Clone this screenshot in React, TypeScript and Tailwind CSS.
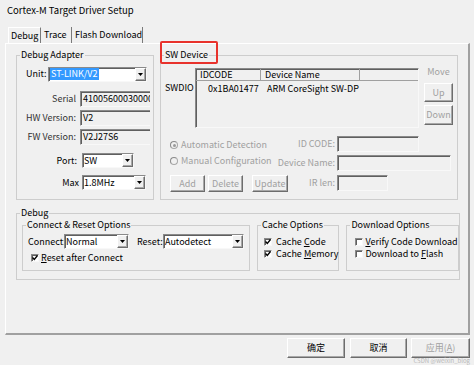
import type { ReactNode } from 'react'

const sunken =
  'border border-t-[#8a8a8a] border-l-[#8a8a8a] border-r-[#f8f8f8] border-b-[#f8f8f8] shadow-[inset_1px_1px_0_#5f5f5f]'
const raised =
  'border border-t-white border-l-white border-r-[#6d6d6d] border-b-[#6d6d6d] shadow-[inset_-1px_-1px_0_#a8a8a8]'

function Group({
  title,
  className,
  children,
}: {
  title: string
  className: string
  children?: ReactNode
}) {
  return (
    <fieldset className={`border border-[#cdcdcd] ${className}`}>
      <legend className="ml-[3px] h-[12px] px-[1px] leading-[12px]">{title}</legend>
      {children}
    </fieldset>
  )
}

function Arrow() {
  return (
    <div className={`flex w-[11px] shrink-0 items-center justify-center bg-[#f0f0f0] ${raised}`}>
      <svg width="5" height="3" viewBox="0 0 5 3">
        <path d="M0 0h5L2.5 3z" fill="#000" />
      </svg>
    </div>
  )
}

function Select({ className, children }: { className: string; children: ReactNode }) {
  return (
    <div className={`flex h-[15px] shrink-0 bg-white ${sunken} ${className}`}>
      <div className="flex flex-1 items-center overflow-hidden pl-[1px]">{children}</div>
      <Arrow />
    </div>
  )
}

function Field({ className, children }: { className: string; children?: ReactNode }) {
  return (
    <div className={`flex h-[16px] shrink-0 items-center overflow-hidden pl-[2px] ${sunken} ${className}`}>
      {children}
    </div>
  )
}

function Check({ on }: { on?: boolean }) {
  return (
    <span className={`flex h-[8px] w-[8px] shrink-0 items-center justify-center bg-white ${sunken}`}>
      {on && (
        <svg width="6" height="6" viewBox="0 0 6 6">
          <path d="M0.5 2.5l1.8 2 3.2-4" stroke="#000" strokeWidth="1.4" fill="none" />
        </svg>
      )}
    </span>
  )
}

function Radio({ on }: { on?: boolean }) {
  return (
    <span className="flex h-[8px] w-[8px] shrink-0 items-center justify-center rounded-full border border-[#a8a8a8] border-t-[#8a8a8a] border-l-[#8a8a8a] bg-[#f0f0f0]">
      {on && <span className="h-[3px] w-[3px] rounded-full bg-[#9a9a9a]" />}
    </span>
  )
}

function Btn({
  className,
  disabled,
  children,
}: {
  className: string
  disabled?: boolean
  children: ReactNode
}) {
  return (
    <div
      className={`flex shrink-0 items-center justify-center bg-[#f0f0f0] ${raised} ${
        disabled ? 'text-[#a0a0a0]' : 'text-black'
      } ${className}`}
    >
      {children}
    </div>
  )
}

export default function App() {
  return (
    <div className="relative h-[365px] w-[474px] overflow-hidden whitespace-nowrap bg-[#f0f0f0] font-[family-name:'Noto_Sans_CJK_SC','Noto_Sans',sans-serif] text-[9px] leading-[12px] text-black">
      <div className="flex h-[20px] items-center pl-[7px] text-[9.5px]">Cortex-M Target Driver Setup</div>

      {/* tabs */}
      <div className="mt-[7px] flex h-[16px] pl-[8px]">
        <div className="flex w-[33px] items-center border-l border-t border-white border-r border-r-[#7a7a7a] pl-[2px]">
          Debug
        </div>
        <div className="flex w-[31px] items-center border-r border-[#7a7a7a] pl-[3px]">Trace</div>
        <div className="flex w-[71px] items-center border-r border-[#7a7a7a] pl-[3px]">
          Flash Download
        </div>
      </div>

      {/* tab page */}
      <div className="ml-[5px] h-[292px] w-[465px] border-l border-t border-white border-r-2 border-b-2 border-r-[#a0a0a0] border-b-[#a0a0a0] pl-[10px] pt-[5px]">
        <div className="flex gap-[6px]">
          <Group title="Debug Adapter" className="h-[151px] w-[138px]">
            <div className="mt-[5px] flex h-[16px] items-center pl-[9px]">
              <span className="w-[22px]">Unit:</span>
              <Select className="w-[99px]">
                <span className="bg-[#3399ff] px-[1px] text-white">ST-LINK/V2</span>
              </Select>
            </div>
            <div className="mt-[9px] flex items-center">
              <span className="w-[59px] text-right text-[#333]">Serial</span>
              <Field className="ml-[4px] w-[70px] border-r-0">410056000300000</Field>
            </div>
            <div className="mt-[3px] flex items-center">
              <span className="w-[59px] text-right text-[#333]">HW Version:</span>
              <Field className="ml-[4px] w-[70px] border-r-0">V2</Field>
            </div>
            <div className="mt-[3px] flex items-center">
              <span className="w-[59px] text-right text-[#333]">FW Version:</span>
              <Field className="ml-[4px] w-[70px] border-r-0">V2J27S6</Field>
            </div>
            <div className="mt-[8px] flex items-center">
              <span className="w-[60px] text-right">Port:</span>
              <Select className="ml-[5px] w-[52px]">SW</Select>
            </div>
            <div className="mt-[7px] flex items-center">
              <span className="w-[62px] text-right">Max</span>
              <Select className="ml-[3px] w-[64px]">1.8MHz</Select>
            </div>
          </Group>

          <Group title="SW Device" className="h-[151px] w-[298px]">
            <div className="flex h-[67px]">
              <div className="w-[34px] shrink-0 pl-[4px] pt-[21px]">SWDIO</div>
              <div className={`mt-[7px] h-[60px] w-[224px] shrink-0 bg-[#f0f0f0] ${sunken}`}>
                <div className="flex h-[12px] border-b border-[#a0a0a0] leading-[11px]">
                  <div className="w-[65px] border-r border-[#a0a0a0] pl-[4px]">IDCODE</div>
                  <div className="w-[99px] border-r border-[#a0a0a0] pl-[4px]">Device Name</div>
                </div>
                <div className="mt-[2px] flex">
                  <div className="w-[66px] pl-[12px]">0x1BA01477</div>
                  <div className="pl-[5px]">ARM CoreSight SW-DP</div>
                </div>
              </div>
              <div className="ml-[5px] flex w-[29px] flex-col">
                <div className="mt-[5px] text-center text-[#a0a0a0]">Move</div>
                <Btn disabled className="mt-[5px] h-[19px]">
                  Up
                </Btn>
                <Btn disabled className="mt-[3px] h-[20px]">
                  Down
                </Btn>
              </div>
            </div>

            <div className="mt-[8px] flex">
              <div className="w-[135px] shrink-0 pl-[9px] text-[#a0a0a0]">
                <div className="mt-[2px] flex h-[14px] items-center gap-[3px]">
                  <Radio on />
                  Automatic Detection
                </div>
                <div className="mt-[2px] flex h-[14px] items-center gap-[3px]">
                  <Radio />
                  Manual Configuration
                </div>
                <div className="mt-[7px] flex h-[17px]">
                  <Btn disabled className="w-[35px]">
                    Add
                  </Btn>
                  <Btn disabled className="ml-[3px] w-[35px]">
                    Delete
                  </Btn>
                  <Btn disabled className="ml-[9px] w-[36px]">
                    Update
                  </Btn>
                </div>
              </div>
              <div className="text-[#a0a0a0]">
                <div className="flex h-[15px] items-center">
                  <span className="flex w-[39px] justify-end">ID CODE:</span>
                  <Field className="ml-[2px] h-[15px] w-[82px]" />
                </div>
                <div className="mt-[4px] flex h-[15px] items-center">
                  <span className="flex w-[39px] justify-end">Device Name:</span>
                  <Field className="ml-[2px] h-[15px] w-[114px]" />
                </div>
                <div className="mt-[5px] flex h-[15px] items-center">
                  <span className="flex w-[39px] justify-end">IR len:</span>
                  <Field className="ml-[2px] h-[15px] w-[51px]" />
                </div>
              </div>
            </div>
          </Group>
        </div>

        <Group title="Debug" className="mt-[7px] h-[73px] w-[442px]">
          <div className="flex gap-[7px] pl-[5px]">
            <Group title="Connect & Reset Options" className="h-[52px] w-[228px] shrink-0">
              <div className="mt-[3px] flex h-[15px] items-center pl-[5px]">
                <span className="w-[35px] shrink-0">Connect:</span>
                <Select className="ml-[1px] w-[65px]">Normal</Select>
                <span className="ml-[8px] w-[26px] shrink-0">Reset:</span>
                <Select className="w-[81px]">Autodetect</Select>
              </div>
              <div className="mt-[3px] flex h-[12px] items-center gap-[2px] pl-[8px]">
                <Check on />
                <span>
                  <span className="underline">R</span>eset after Connect
                </span>
              </div>
            </Group>
            <Group title="Cache Options" className="h-[52px] w-[80px] shrink-0">
              <div className="mt-[5px] flex h-[12px] items-center gap-[4px] pl-[6px]">
                <Check on />
                <span>
                  Cache <span className="underline">C</span>ode
                </span>
              </div>
              <div className="flex h-[12px] items-center gap-[4px] pl-[6px]">
                <Check on />
                <span>
                  Cache <span className="underline">M</span>emory
                </span>
              </div>
            </Group>
            <Group title="Download Options" className="h-[52px] w-[107px] shrink-0 overflow-hidden">
              <div className="mt-[5px] flex h-[12px] items-center gap-[2px] pl-[8px]">
                <Check />
                <span>
                  <span className="underline">V</span>erify Code Download
                </span>
              </div>
              <div className="flex h-[12px] items-center gap-[2px] pl-[8px]">
                <Check />
                <span>
                  Download to <span className="underline">F</span>lash
                </span>
              </div>
            </Group>
          </div>
        </Group>
      </div>

      {/* dialog buttons */}
      <div className="mt-[3px] flex h-[20px] justify-end pr-[4px]">
        <Btn className="w-[58px]">确定</Btn>
        <Btn className="ml-[5px] w-[57px]">取消</Btn>
        <Btn disabled className="ml-[4px] w-[59px]">
          应用(<span className="underline">A</span>)
        </Btn>
      </div>

      {/* red annotation box */}
      <div className="absolute left-[160px] top-[41px] h-[23px] w-[58px] rounded-[2px] border-2 border-[#e8322c]" />

      <div className="absolute bottom-[1px] right-[4px] text-[6px] leading-[7px] text-[#b8b8b8]">
        CSDN @weixin_blog
      </div>
    </div>
  )
}
